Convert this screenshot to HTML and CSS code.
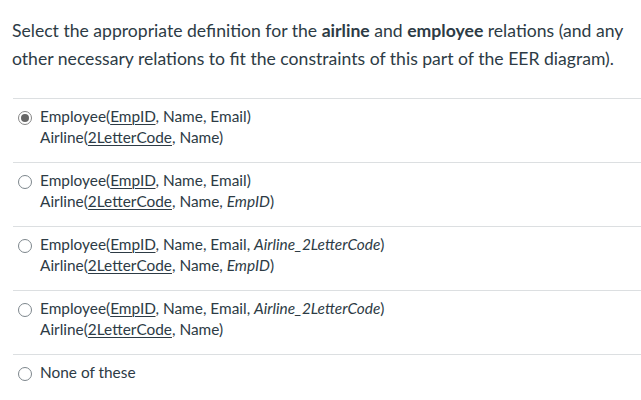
FILE: index.html
```html
<!DOCTYPE html>
<html>
<head>
<meta charset="utf-8">
<link rel="stylesheet" href="styles.css">
</head>
<body>
<div class="question">
  <p class="prompt">Select the appropriate definition for the <strong>airline</strong> and <strong>employee</strong> relations (and any other necessary relations to fit the constraints of this part of the EER diagram).</p>
  <div class="answers">
    <label class="answer">
      <span class="radio checked"></span>
      <span class="text">Employee(<u>EmpID</u>, Name, Email)<br>Airline(<u>2LetterCode</u>, Name)</span>
    </label>
    <label class="answer">
      <span class="radio"></span>
      <span class="text">Employee(<u>EmpID</u>, Name, Email)<br>Airline(<u>2LetterCode</u>, Name, <em>EmpID</em>)</span>
    </label>
    <label class="answer">
      <span class="radio"></span>
      <span class="text">Employee(<u>EmpID</u>, Name, Email, <em>Airline_2LetterCode</em>)<br>Airline(<u>2LetterCode</u>, Name, <em>EmpID</em>)</span>
    </label>
    <label class="answer">
      <span class="radio"></span>
      <span class="text">Employee(<u>EmpID</u>, Name, Email, <em>Airline_2LetterCode</em>)<br>Airline(<u>2LetterCode</u>, Name)</span>
    </label>
    <label class="answer">
      <span class="radio"></span>
      <span class="text">None of these</span>
    </label>
  </div>
</div>
</body>
</html>
```
FILE: styles.css
```css
html, body {
  margin: 0;
  padding: 0;
  background: #fff;
}
body {
  font-family: Lato, "Open Sans", sans-serif;
  color: #2d3b45;
}
.question {
  padding: 0 0 0 12px;
}
.prompt {
  margin: 0;
  padding-top: 17px;
  font-size: 17.6px;
  line-height: 28px;
  width: 625px;
}
.prompt strong {
  font-weight: 700;
}
.answers {
  margin-top: 25px;
  margin-left: 1px;
}
.answer {
  display: flex;
  align-items: flex-start;
  border-top: 1px solid #dcdfe1;
  padding: 7px 0 14px 5px;
  font-size: 15.4px;
  line-height: 21px;
}
.answer .radio {
  flex: none;
  width: 12px;
  height: 12px;
  border: 1px solid #7d868c;
  border-radius: 50%;
  margin: 5px 8px 0 0;
  position: relative;
  background: #fff;
}
.answer .radio.checked {
  border-color: #858585;
}
.answer .radio.checked::after {
  content: "";
  position: absolute;
  left: 2px;
  top: 2px;
  width: 8px;
  height: 8px;
  border-radius: 50%;
  background: #666;
}
.text u {
  text-decoration-thickness: 1px;
  text-underline-offset: 2px;
}
```
